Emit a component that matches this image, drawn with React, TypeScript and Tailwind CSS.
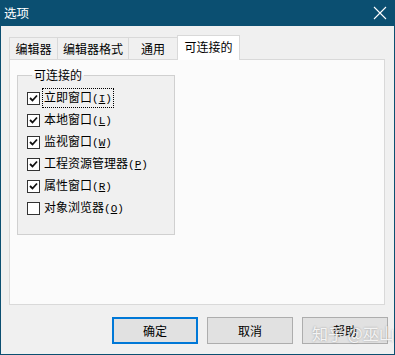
import React from 'react';

const font = { fontFamily: '"Noto Sans CJK SC", "Noto Sans", sans-serif' };

const tabs = [
  { label: '编辑器', w: 'w-[48px]' },
  { label: '编辑器格式', w: 'w-[71px]' },
  { label: '通用', w: 'w-[49px]' },
];

const items = [
  { label: '立即窗口', key: 'I', checked: true, focused: true },
  { label: '本地窗口', key: 'L', checked: true },
  { label: '监视窗口', key: 'W', checked: true },
  { label: '工程资源管理器', key: 'P', checked: true },
  { label: '属性窗口', key: 'R', checked: true },
  { label: '对象浏览器', key: 'O', checked: false },
];

function CheckBox({ checked }: { checked: boolean }) {
  return (
    <span className="w-[13px] h-[13px] border border-[#333333] bg-white flex items-center justify-center shrink-0">
      {checked && (
        <svg width="9" height="9" viewBox="0 0 9 9">
          <path d="M1 4 L3.5 6.5 L8 1.5" stroke="#111" strokeWidth="1.8" fill="none" />
        </svg>
      )}
    </span>
  );
}

export default function App() {
  return (
    <div
      className="w-[395px] h-[355px] overflow-hidden bg-[#0b4f71] px-px pb-px flex flex-col text-[12px] text-black"
      style={font}
    >
      <div className="h-[26px] flex items-center justify-between pl-[3px] pr-[7px] text-white text-[12.5px]">
        <span>选项</span>
        <svg width="14" height="14" viewBox="0 0 14 14">
          <path d="M1 1 L13 13 M13 1 L1 13" stroke="#fff" strokeWidth="1.1" />
        </svg>
      </div>

      <div className="flex-1 bg-[#f0f0f0] relative flex flex-col">
        <div className="flex items-end h-[25px] mt-[9px] pl-[8px] relative z-10">
          {tabs.map((t) => (
            <div
              key={t.label}
              className={`${t.w} h-[22px] flex items-center justify-center border-t border-l border-[#d9d9d9] bg-[#f0f0f0] mb-px`}
            >
              {t.label}
            </div>
          ))}
          <div className="h-[25px] w-[63px] flex items-center justify-center bg-white border border-b-0 border-[#d9d9d9] pb-[3px]">
            可连接的
          </div>
        </div>

        <div className="ml-[8px] w-[376px] h-[246px] -mt-px bg-[#fbfbfb] border border-[#d9d9d9] pl-[7px] pt-[6px]">
          <fieldset className="w-[158px] h-[169px] bg-[#f0f0f0] border border-[#d0d0d0] px-[9px] pt-[3px]">
            <legend className="ml-[5px] px-[2px] leading-[18px]">可连接的</legend>
            <div className="flex flex-col">
              {items.map((it) => (
                <div key={it.label} className="h-[22px] flex items-center gap-[3px]">
                  <CheckBox checked={it.checked} />
                  <span
                    className={`px-px leading-[15px] ${
                      it.focused ? 'outline outline-1 outline-dotted outline-black' : ''
                    }`}
                  >
                    {it.label}
                    <span className="text-[11px]" style={{ fontFamily: '"Liberation Mono", monospace' }}>
                      (<u>{it.key}</u>)
                    </span>
                  </span>
                </div>
              ))}
            </div>
          </fieldset>
        </div>

        <div className="flex justify-end gap-[9px] pr-[6px] mt-[12px]">
          <button className="w-[86px] h-[27px] bg-[#e1e1e1] border-2 border-[#0078d7]">确定</button>
          <button className="w-[86px] h-[27px] bg-[#e1e1e1] border border-[#adadad]">取消</button>
          <button className="w-[86px] h-[27px] bg-[#e1e1e1] border border-[#adadad]">帮助</button>
        </div>

        <div className="absolute left-[311px] top-[298px] whitespace-nowrap text-[16px] leading-[18px] text-white/85 [text-shadow:0_0_2px_rgba(0,0,0,0.35)]">
          知乎 @巫山
        </div>
      </div>
    </div>
  );
}
